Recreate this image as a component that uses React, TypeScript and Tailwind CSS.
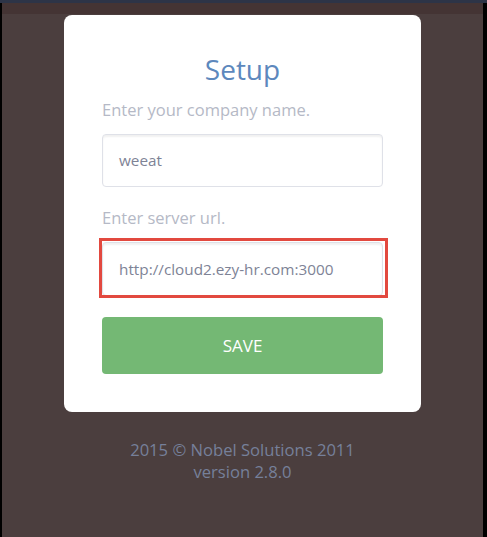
export default function App() {
  return (
    <div className="w-[487px] h-[537px] flex flex-col bg-black overflow-hidden font-['Open_Sans',sans-serif]">
      <div className="h-[3px] bg-[#2d3447]" />
      <div className="flex flex-1">
        <div className="w-[2px] bg-black" />
        <main className="flex-1 flex flex-col bg-[#4b3e3e]">
          <div className="h-[11px] bg-[#443434]" />
          <div className="mt-[1px] ml-[62px] w-[357px] rounded-lg bg-white px-[38px] pt-[35px] pb-[38px] flex flex-col">
            <h1 className="text-center text-[28px] leading-[38px] text-[#5d88bd]">Setup</h1>
            <p className="mt-[10px] text-[16.5px] leading-6 text-[#b5b9c6]">Enter your company name.</p>
            <div className="mt-3 h-[53px] rounded border border-[#dfe1e8] shadow-[inset_0_2px_2px_rgba(0,0,0,0.06)] flex items-center px-4 text-[15.3px] text-[#7e8396]">
              weeat
            </div>
            <p className="mt-[19px] text-[16.5px] leading-6 text-[#b5b9c6]">Enter server url.</p>
            <div className="relative mt-3">
              <div className="h-[54px] rounded border border-[#dfe1e8] shadow-[inset_0_2px_2px_rgba(0,0,0,0.06)] flex items-center px-4 text-[15.3px] text-[#7e8396]">
                http://cloud2.ezy-hr.com:3000
              </div>
              <div className="absolute -left-[3px] -top-[4px] -right-[5px] -bottom-[2px] border-[3px] border-[#e2493f]" />
            </div>
            <button className="mt-[21px] h-[57px] rounded bg-[#74b874] text-white text-[17px]">SAVE</button>
          </div>
          <div className="mt-[27px] ml-[62px] w-[357px] text-center text-[16.6px] leading-[22px] text-[#76809a]">
            <p>2015 © Nobel Solutions 2011</p>
            <p>version 2.8.0</p>
          </div>
        </main>
        <div className="w-[4px] bg-black" />
      </div>
    </div>
  );
}
